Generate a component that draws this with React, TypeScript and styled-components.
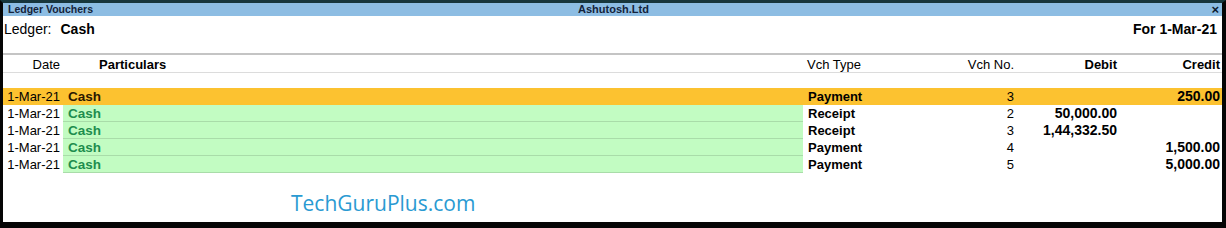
import React from "react";
import styled, { createGlobalStyle } from "styled-components";

const Global = createGlobalStyle`
  html, body { margin: 0; padding: 0; background: #000; }
  body { font-family: "Liberation Sans", Arial, sans-serif; }
`;

const Window = styled.div`
  position: relative;
  width: 1226px;
  height: 228px;
  box-sizing: border-box;
  background: #fff;
  border-top: 3px solid #17363c;
  border-left: 3px solid #050505;
  border-right: 4px solid #050505;
  border-bottom: 6px solid #050505;
  display: flex;
  flex-direction: column;
  overflow: hidden;
`;

const TitleBar = styled.div`
  height: 13px;
  background: #8dbde3;
  display: grid;
  grid-template-columns: 1fr auto 1fr;
  align-items: center;
  padding: 0 3px 0 5px;
  font-size: 10.5px;
  font-weight: bold;
  color: #14233a;
  line-height: 13px;
`;

const TitleLeft = styled.span`
  justify-self: start;
`;

const TitleCenter = styled.span`
  justify-self: center;
  font-size: 11px;
`;

const Close = styled.span`
  justify-self: end;
  font-size: 13px;
  color: #0c1a2e;
  line-height: 13px;
`;

const LedgerBar = styled.div`
  height: 26px;
  display: flex;
  justify-content: space-between;
  align-items: center;
  padding: 0 5px 0 1px;
  font-size: 14px;
  color: #000;
  box-sizing: border-box;
`;

const LedgerLabel = styled.span`
  b { margin-left: 9px; }
`;

const Separator = styled.div`
  margin-top: 11px;
  height: 2px;
  background: #c4c4c4;
`;

const cols = "60px 740px 137px 77px 102px 103px";

const HeaderRow = styled.div`
  display: grid;
  grid-template-columns: ${cols};
  height: 16px;
  align-items: center;
  font-size: 13px;
  color: #000;
  border-bottom: 1px solid #dcdcdc;
  padding-top: 1px;
`;

const Cell = styled.div<{ $align?: "left" | "right"; $bold?: boolean; $pl?: number; $pr?: number }>`
  text-align: ${(p) => p.$align || "left"};
  font-weight: ${(p) => (p.$bold ? "bold" : "normal")};
  padding-left: ${(p) => p.$pl ?? 0}px;
  padding-right: ${(p) => p.$pr ?? 0}px;
  white-space: nowrap;
  overflow: hidden;
`;

const Amount = styled(Cell)`
  font-size: 14px;
`;

const Body = styled.div`
  margin-top: 15px;
  display: flex;
  flex-direction: column;
`;

const Row = styled.div<{ $active?: boolean }>`
  display: grid;
  grid-template-columns: ${cols};
  height: 17px;
  align-items: stretch;
  font-size: 13px;
  line-height: 17px;
  color: #000;
  background: ${(p) => (p.$active ? "#fcc230" : "transparent")};
`;

const Particular = styled.div<{ $active?: boolean }>`
  padding-left: 5px;
  font-size: 13.5px;
  font-weight: bold;
  color: ${(p) => (p.$active ? "#2a1800" : "#1d8d4e")};
  background: ${(p) => (p.$active ? "transparent" : "#c2fcc2")};
  box-shadow: ${(p) => (p.$active ? "none" : "inset 0 -1px 0 #a9dca9")};
`;

const Watermark = styled.div`
  position: absolute;
  left: 288px;
  top: 186px;
  font-family: "Open Sans", "Noto Sans", sans-serif;
  font-size: 21px;
  color: #2a9ad2;
`;

type Entry = { type: string; no: string; debit?: string; credit?: string };

const entries: Entry[] = [
  { type: "Payment", no: "3", credit: "250.00" },
  { type: "Receipt", no: "2", debit: "50,000.00" },
  { type: "Receipt", no: "3", debit: "1,44,332.50" },
  { type: "Payment", no: "4", credit: "1,500.00" },
  { type: "Payment", no: "5", credit: "5,000.00" },
];

export default function App() {
  return (
    <>
      <Global />
      <Window>
        <TitleBar>
          <TitleLeft>Ledger Vouchers</TitleLeft>
          <TitleCenter>Ashutosh.Ltd</TitleCenter>
          <Close>×</Close>
        </TitleBar>
        <LedgerBar>
          <LedgerLabel>
            Ledger:<b>Cash</b>
          </LedgerLabel>
          <b>For 1-Mar-21</b>
        </LedgerBar>
        <Separator />
        <HeaderRow>
          <Cell $align="right" $pr={3}>Date</Cell>
          <Cell $bold $pl={36}>Particulars</Cell>
          <Cell $pl={4}>Vch Type</Cell>
          <Cell $align="right" $pr={3}>Vch No.</Cell>
          <Cell $align="right" $bold $pr={2}>Debit</Cell>
          <Cell $align="right" $bold $pr={2}>Credit</Cell>
        </HeaderRow>
        <Body>
          {entries.map((e, i) => (
            <Row key={i} $active={i === 0}>
              <Cell $align="right" $pr={3}>1-Mar-21</Cell>
              <Particular $active={i === 0}>Cash</Particular>
              <Cell $bold $pl={5}>{e.type}</Cell>
              <Cell $align="right" $pr={3}>{e.no}</Cell>
              <Amount $align="right" $bold $pr={2}>{e.debit ?? ""}</Amount>
              <Amount $align="right" $bold $pr={2}>{e.credit ?? ""}</Amount>
            </Row>
          ))}
        </Body>
        <Watermark>TechGuruPlus.com</Watermark>
      </Window>
    </>
  );
}
